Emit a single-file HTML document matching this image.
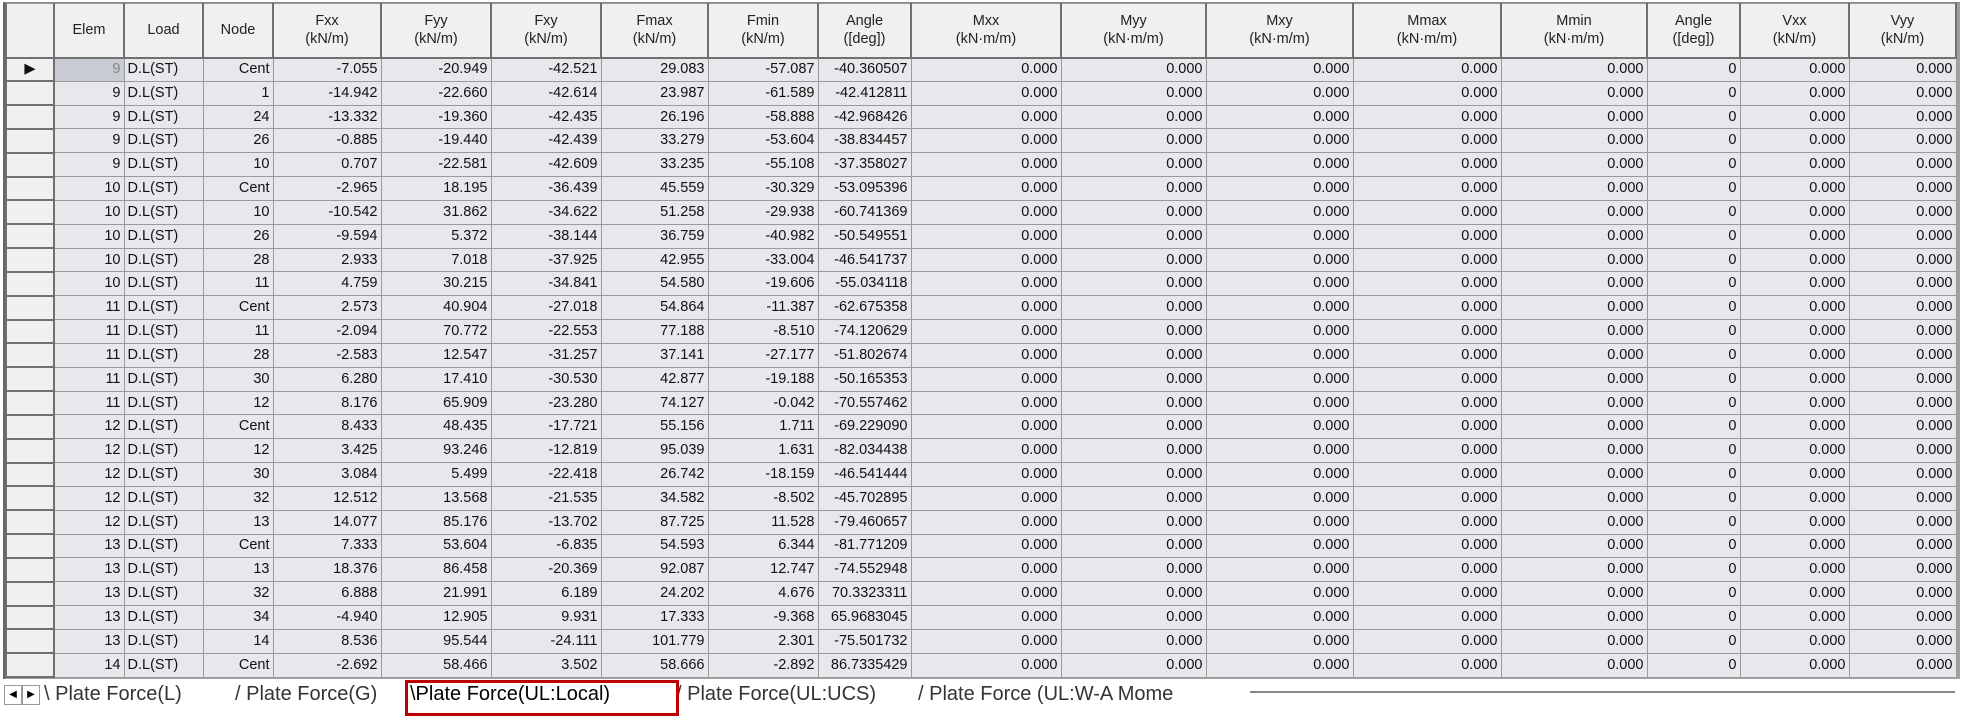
<!DOCTYPE html>
<html><head><meta charset="utf-8"><style>
body{margin:0;width:1962px;height:715px;background:#fff;font-family:"Liberation Sans",Arial,sans-serif;overflow:hidden;position:relative}
#wrap{position:absolute;left:3px;top:2px;width:1955px;height:676px;background:#a0a0a0;overflow:hidden;border-top:1px solid #888;border-left:2px solid #666}
table{border-collapse:collapse;table-layout:fixed;position:absolute;left:0;top:0}
td,th{border:1px solid #9a9a9a;padding:0 3px;font-size:14.5px;white-space:nowrap;overflow:hidden;box-sizing:border-box}
th{height:54px;background:#f0f0f0;font-weight:normal;color:#222;line-height:18px;border:2px solid #707070;border-top:1px solid #999}
tr.r{height:23.84px}
td{height:23.84px;line-height:21px;background:#e6e8ec;color:#111;text-align:right}
td.rh{background:#f0f0f0;border:2px solid #707070;border-top:1px solid #707070;text-align:center}
td.l{text-align:left}
td.sel{background:#c8ccd2;color:#888}
#tabs{position:absolute;left:0;top:679px;width:1962px;height:36px;background:#fff}
.tab{position:absolute;top:4px;font-size:20px;color:#333}
</style></head><body>
<div id="wrap"><table>
<colgroup><col style="width:48px"><col style="width:70px"><col style="width:79px"><col style="width:70px"><col style="width:108px"><col style="width:110px"><col style="width:110px"><col style="width:107px"><col style="width:110px"><col style="width:93px"><col style="width:150px"><col style="width:145px"><col style="width:147px"><col style="width:148px"><col style="width:146px"><col style="width:93px"><col style="width:109px"><col style="width:107px"></colgroup>
<tr><th></th><th>Elem</th><th>Load</th><th>Node</th><th>Fxx<br>(kN/m)</th><th>Fyy<br>(kN/m)</th><th>Fxy<br>(kN/m)</th><th>Fmax<br>(kN/m)</th><th>Fmin<br>(kN/m)</th><th>Angle<br>([deg])</th><th>Mxx<br>(kN·m/m)</th><th>Myy<br>(kN·m/m)</th><th>Mxy<br>(kN·m/m)</th><th>Mmax<br>(kN·m/m)</th><th>Mmin<br>(kN·m/m)</th><th>Angle<br>([deg])</th><th>Vxx<br>(kN/m)</th><th>Vyy<br>(kN/m)</th></tr>
<tbody id="tb"></tbody>
</table></div>
<div id="tabs">
<div style="position:absolute;left:4px;top:6px;width:16px;height:18px;border:1px solid #999;font-size:10px;text-align:center;line-height:18px">◀</div>
<div style="position:absolute;left:22px;top:6px;width:16px;height:18px;border:1px solid #999;font-size:10px;text-align:center;line-height:18px">▶</div>
<div class="tab" style="left:44px">\ Plate Force(L)</div>
<div class="tab" style="left:235px">/ Plate Force(G)</div>
<div class="tab" style="left:410px;color:#000">\Plate Force(UL:Local)</div>
<div class="tab" style="left:676px">/ Plate Force(UL:UCS)</div>
<div class="tab" style="left:918px">/ Plate Force (UL:W-A Mome</div>
<div style="position:absolute;left:405px;top:1px;width:268px;height:30px;border:3px solid #c00000"></div>
<div style="position:absolute;left:1250px;top:12px;width:705px;height:2px;background:#888"></div>
</div>
<script>
var d=[[9,"Cent",-7.055,-20.949,-42.521,29.083,-57.087,"-40.360507"],[9,1,-14.942,-22.660,-42.614,23.987,-61.589,"-42.412811"],[9,24,-13.332,-19.360,-42.435,26.196,-58.888,"-42.968426"],[9,26,-0.885,-19.440,-42.439,33.279,-53.604,"-38.834457"],[9,10,0.707,-22.581,-42.609,33.235,-55.108,"-37.358027"],[10,"Cent",-2.965,18.195,-36.439,45.559,-30.329,"-53.095396"],[10,10,-10.542,31.862,-34.622,51.258,-29.938,"-60.741369"],[10,26,-9.594,5.372,-38.144,36.759,-40.982,"-50.549551"],[10,28,2.933,7.018,-37.925,42.955,-33.004,"-46.541737"],[10,11,4.759,30.215,-34.841,54.580,-19.606,"-55.034118"],[11,"Cent",2.573,40.904,-27.018,54.864,-11.387,"-62.675358"],[11,11,-2.094,70.772,-22.553,77.188,-8.510,"-74.120629"],[11,28,-2.583,12.547,-31.257,37.141,-27.177,"-51.802674"],[11,30,6.280,17.410,-30.530,42.877,-19.188,"-50.165353"],[11,12,8.176,65.909,-23.280,74.127,-0.042,"-70.557462"],[12,"Cent",8.433,48.435,-17.721,55.156,1.711,"-69.229090"],[12,12,3.425,93.246,-12.819,95.039,1.631,"-82.034438"],[12,30,3.084,5.499,-22.418,26.742,-18.159,"-46.541444"],[12,32,12.512,13.568,-21.535,34.582,-8.502,"-45.702895"],[12,13,14.077,85.176,-13.702,87.725,11.528,"-79.460657"],[13,"Cent",7.333,53.604,-6.835,54.593,6.344,"-81.771209"],[13,13,18.376,86.458,-20.369,92.087,12.747,"-74.552948"],[13,32,6.888,21.991,6.189,24.202,4.676,"70.3323311"],[13,34,-4.940,12.905,9.931,17.333,-9.368,"65.9683045"],[13,14,8.536,95.544,-24.111,101.779,2.301,"-75.501732"],[14,"Cent",-2.692,58.466,3.502,58.666,-2.892,"86.7335429"]];
var h="";d.forEach(function(r,i){h+="<tr class='r'><td class='rh'>"+(i==0?"&#9654;":"")+"</td><td"+(i==0?" class='sel'":"")+">"+r[0]+"</td><td class='l'>D.L(ST)</td><td>"+r[1]+"</td>";for(var k=2;k<7;k++)h+="<td>"+r[k].toFixed(3)+"</td>";h+="<td>"+r[7]+"</td>";for(var k=0;k<5;k++)h+="<td>0.000</td>";h+="<td>0</td><td>0.000</td><td>0.000</td></tr>";});
document.getElementById("tb").innerHTML=h;
</script>
</body></html>
